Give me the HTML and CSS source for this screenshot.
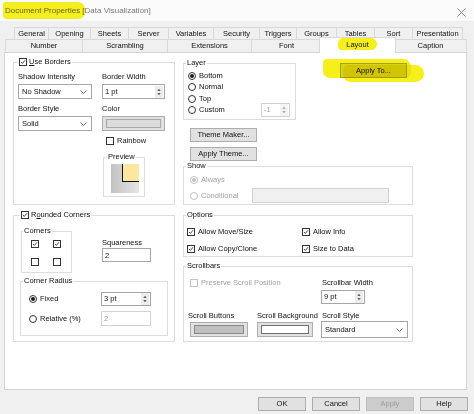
FILE: index.html
```html
<!DOCTYPE html>
<html lang="en">
<head>
<meta charset="utf-8">
<title>Document Properties</title>
<link rel="stylesheet" href="styles.css">
</head>
<body>
<div class="titlebar">
  <div class="title"><span class="title-hl">Document Properties [</span>Data Visualization]</div>
  <svg class="close" width="9" height="9" viewBox="0 0 9 9"><path d="M0.5 0.5L8.5 8.5M8.5 0.5L0.5 8.5" stroke="#7a7a7a" stroke-width="0.9" fill="none"/></svg>
</div>

<div class="tabs">
  <div class="tabrow back">
    <div class="tab t-general">General</div>
    <div class="tab t-opening">Opening</div>
    <div class="tab t-sheets">Sheets</div>
    <div class="tab t-server">Server</div>
    <div class="tab t-variables">Variables</div>
    <div class="tab t-security">Security</div>
    <div class="tab t-triggers">Triggers</div>
    <div class="tab t-groups">Groups</div>
    <div class="tab t-tables">Tables</div>
    <div class="tab t-sort">Sort</div>
    <div class="tab t-presentation last">Presentation</div>
  </div>
  <div class="tabrow front">
    <div class="tab t-number">Number</div>
    <div class="tab t-scrambling">Scrambling</div>
    <div class="tab t-extensions">Extensions</div>
    <div class="tab t-font">Font</div>
    <div class="tab t-layout active"><span class="tab-hl"></span>Layout</div>
    <div class="tab t-caption last">Caption</div>
  </div>
</div>

<div class="panel">
  <div class="col-left">
    <fieldset class="group g-borders">
      <legend class="legend-cb lg-borders"><span class="cb"><svg viewBox="0 0 8 8"><polyline points="1.3,4 3.1,5.9 6.7,1.7"/></svg></span><span><u>U</u>se Borders</span></legend>
      <div class="borders-body">
        <div class="bcol bcol1">
          <div class="lbl">Shadow Intensity</div>
          <div class="select sel-shadow"><span>No Shadow</span><svg class="chev" viewBox="0 0 7 4"><polyline points="0.5,0.5 3.5,3.5 6.5,0.5"/></svg></div>
          <div class="lbl mt5">Border Style</div>
          <div class="select sel-shadow"><span>Solid</span><svg class="chev" viewBox="0 0 7 4"><polyline points="0.5,0.5 3.5,3.5 6.5,0.5"/></svg></div>
        </div>
        <div class="bcol bcol2">
          <div class="lbl">Border Width</div>
          <div class="spin spin-bw"><span>1 pt</span><svg class="arrows" viewBox="0 0 8 13"><polygon points="2.2,5.2 4,3.2 5.8,5.2"/><polygon points="2.2,7.8 4,9.8 5.8,7.8"/></svg></div>
          <div class="lbl mt5">Color</div>
          <div class="colorbtn cbtn-color"><span class="swatch sw-light"></span></div>
          <div class="check-row rainbow"><span class="cb"></span><span>Rainbow</span></div>
          <fieldset class="group g-preview">
            <legend class="lg-preview">Preview</legend>
            <div class="preview-art"><div class="preview-box"></div></div>
          </fieldset>
        </div>
      </div>
    </fieldset>

    <fieldset class="group g-rounded">
      <legend class="legend-cb lg-rounded"><span class="cb"><svg viewBox="0 0 8 8"><polyline points="1.3,4 3.1,5.9 6.7,1.7"/></svg></span><span>R<u>o</u>unded Corners</span></legend>
      <div class="rounded-top">
        <fieldset class="group g-corners">
          <legend class="lg-corners">Corners</legend>
          <div class="corner-grid">
            <span class="cb"><svg viewBox="0 0 8 8"><polyline points="1.3,4 3.1,5.9 6.7,1.7"/></svg></span>
            <span class="cb"><svg viewBox="0 0 8 8"><polyline points="1.3,4 3.1,5.9 6.7,1.7"/></svg></span>
            <span class="cb"></span>
            <span class="cb"></span>
          </div>
        </fieldset>
        <div class="squareness">
          <div class="lbl">Squareness</div>
          <div class="textbox tb-sq">2</div>
        </div>
      </div>
      <fieldset class="group g-radius">
        <legend class="lg-radius">Corner Radius</legend>
        <div class="radius-grid">
          <div class="radio-row"><span class="rb on"></span><span>Fixed</span></div>
          <div class="spin spin-radius"><span>3 pt</span><svg class="arrows" viewBox="0 0 8 13"><polygon points="2.2,5.2 4,3.2 5.8,5.2"/><polygon points="2.2,7.8 4,9.8 5.8,7.8"/></svg></div>
          <div class="radio-row"><span class="rb"></span><span>Relative (%)</span></div>
          <div class="textbox tb-rel disabled">2</div>
        </div>
      </fieldset>
    </fieldset>
  </div>

  <div class="col-right">
    <div class="top-row">
      <fieldset class="group g-layer">
        <legend class="lg-layer">Layer</legend>
        <div class="radio-row lrow"><span class="rb on"></span><span>Bottom</span></div>
        <div class="radio-row lrow"><span class="rb"></span><span>Normal</span></div>
        <div class="radio-row lrow"><span class="rb"></span><span>Top</span></div>
        <div class="radio-row lrow"><span class="rb"></span><span>Custom</span>
          <div class="spin spin-custom disabled"><span>-1</span><svg class="arrows" viewBox="0 0 8 13"><polygon points="2.2,5.2 4,3.2 5.8,5.2"/><polygon points="2.2,7.8 4,9.8 5.8,7.8"/></svg></div>
        </div>
      </fieldset>
      <div class="btn btn-applyto">Apply To...</div>
      <span class="hl-blob blob1"></span>
      <span class="hl-blob blob2"></span>
    </div>
    <div class="btn btn-theme">Theme Maker...</div>
    <div class="btn btn-theme btn-applytheme">Apply Theme...</div>

    <fieldset class="group g-show">
      <legend class="lg-show">Show</legend>
      <div class="radio-row dis show-row1"><span class="rb on dis"></span><span>Always</span></div>
      <div class="radio-row dis show-row2"><span class="rb dis"></span><span class="cond-lbl">Conditional</span><div class="textbox tb-cond disabled"></div></div>
    </fieldset>

    <fieldset class="group g-options">
      <legend class="lg-options">Options</legend>
      <div class="options-grid">
        <div class="check-row"><span class="cb"><svg viewBox="0 0 8 8"><polyline points="1.3,4 3.1,5.9 6.7,1.7"/></svg></span><span>Allow Move/Size</span></div>
        <div class="check-row"><span class="cb"><svg viewBox="0 0 8 8"><polyline points="1.3,4 3.1,5.9 6.7,1.7"/></svg></span><span>Allow Info</span></div>
        <div class="check-row"><span class="cb"><svg viewBox="0 0 8 8"><polyline points="1.3,4 3.1,5.9 6.7,1.7"/></svg></span><span>Allow Copy/Clone</span></div>
        <div class="check-row"><span class="cb"><svg viewBox="0 0 8 8"><polyline points="1.3,4 3.1,5.9 6.7,1.7"/></svg></span><span>Size to Data</span></div>
      </div>
    </fieldset>

    <fieldset class="group g-scroll">
      <legend class="lg-scroll">Scrollbars</legend>
      <div class="scroll-grid">
        <div class="check-row dis preserve"><span class="cb dis"></span><span>Preserve Scroll Position</span></div>
        <div class="lbl sw-lbl">Scrollbar Width</div>
        <div class="spin spin-sw"><span>9 pt</span><svg class="arrows" viewBox="0 0 8 13"><polygon points="2.2,5.2 4,3.2 5.8,5.2"/><polygon points="2.2,7.8 4,9.8 5.8,7.8"/></svg></div>
        <div class="lbl sl1">Scroll Buttons</div>
        <div class="lbl sl2">Scroll Background</div>
        <div class="lbl sl3">Scroll Style</div>
        <div class="colorbtn cbtn-sb"><span class="swatch sw-gray"></span></div>
        <div class="colorbtn cbtn-bg"><span class="swatch sw-white"></span></div>
        <div class="select sel-style"><span>Standard</span><svg class="chev" viewBox="0 0 7 4"><polyline points="0.5,0.5 3.5,3.5 6.5,0.5"/></svg></div>
      </div>
    </fieldset>
  </div>
</div>

<div class="footer">
  <div class="btn fbtn">OK</div>
  <div class="btn fbtn">Cancel</div>
  <div class="btn fbtn fdis">Apply</div>
  <div class="btn fbtn">Help</div>
</div>
</body>
</html>
```

FILE: styles.css
```css
* { box-sizing: border-box; }
html, body { margin: 0; padding: 0; }
body {
  width: 474px;
  height: 414px;
  overflow: hidden;
  background: #f0f0f0;
  font-family: "Liberation Sans", Arial, sans-serif;
  font-size: 7.5px;
  line-height: 10px;
  color: #111;
}

/* Title bar */
.titlebar {
  height: 21px;
  background: #fbfbfb;
  display: flex;
  align-items: center;
  justify-content: space-between;
  padding: 0 8px 0 3px;
}
.title { font-size: 8px; color: #777; white-space: nowrap; }
.title-hl {
  background: #f5ef1f;
  color: #6a6316;
  padding: 4px 0 4px 2px;
  border-radius: 3px 7px 7px 4px;
}
.close { margin-top: 3px; }

/* Tabs */
.tabs { padding-top: 6px; }
.tabrow { display: flex; }
.tabrow.back { height: 12px; margin-left: 14px; }
.tabrow.front { height: 13px; margin-left: 5px; }
.tab {
  flex: none;
  text-align: center;
  border-top: 1px solid #d9d9d9;
  border-left: 1px solid #d9d9d9;
  background: #f0f0f0;
  white-space: nowrap;
  color: #111;
}
.tab.last { border-right: 1px solid #d9d9d9; }
.back .tab { line-height: 11px; }
.front .tab { line-height: 12px; }
.t-general { width: 34px; }
.t-opening { width: 42px; }
.t-sheets { width: 38px; }
.t-server { width: 40px; }
.t-variables { width: 45px; }
.t-security { width: 46px; }
.t-triggers { width: 37px; }
.t-groups { width: 40px; }
.t-tables { width: 38px; }
.t-sort { width: 38px; }
.t-presentation { width: 51px; }
.t-number { width: 77px; }
.t-scrambling { width: 85px; }
.t-extensions { width: 84px; }
.t-font { width: 70px; }
.t-layout { width: 73px; }
.t-caption { width: 73px; }
.tab.active {
  position: relative;
  z-index: 2;
  width: 77px;
  margin: -2px -2px 0 -2px;
  height: 16px;
  background: #fff;
  border-right: 1px solid #d9d9d9;
  line-height: 14px;
}
.tab-hl {
  position: absolute;
  left: 18px;
  top: 0;
  width: 39px;
  height: 12px;
  border-radius: 5px 6px 6px 4px;
  background: #f6ef1c;
  mix-blend-mode: multiply;
}

/* Panel */
.panel {
  margin-left: 4px;
  width: 463px;
  height: 338px;
  background: #fff;
  border: 1px solid #d5d5d5;
  display: flex;
  align-items: flex-start;
  padding: 4px 0 0 8px;
  gap: 8px;
}
.col-left { width: 162px; display: flex; flex-direction: column; }
.col-right { width: 230px; display: flex; flex-direction: column; align-items: flex-start; }

/* Group boxes */
.group {
  margin: 0;
  min-width: 0;
  border: 1px solid #dcdcdc;
  padding: 0;
}
.group > legend {
  padding: 0 1px;
  height: 10px;
  line-height: 10px;
  color: #111;
  white-space: nowrap;
}
.legend-cb { display: flex; align-items: center; gap: 2px; }

/* Controls */
.cb {
  flex: none;
  display: inline-block;
  width: 8px;
  height: 8px;
  border: 1px solid #333;
  background: #fff;
  position: relative;
}
.cb svg { display: block; width: 6px; height: 6px; }
.cb svg polyline { fill: none; stroke: #222; stroke-width: 1.1; }
.cb.dis { border-color: #c4c4c4; }
.rb {
  flex: none;
  display: inline-block;
  width: 8px;
  height: 8px;
  border: 1px solid #333;
  border-radius: 50%;
  background: #fff;
  position: relative;
}
.rb.on::after {
  content: "";
  position: absolute;
  left: 1px; top: 1px;
  width: 4px; height: 4px;
  border-radius: 50%;
  background: #1a1a1a;
}
.rb.dis { border-color: #c0c0c0; }
.rb.dis.on::after { background: #c0c0c0; }
.dis { color: #a3a3a3; }

.lbl { height: 10px; line-height: 10px; white-space: nowrap; color: #111; }
.mt5 { margin-top: 5px; }

.select {
  height: 15px;
  border: 1px solid #a6a6a6;
  background: #fff;
  display: flex;
  align-items: center;
  justify-content: space-between;
  padding: 0 4px 0 3px;
  white-space: nowrap;
}
.chev { width: 7px; height: 4px; }
.chev polyline { fill: none; stroke: #555; stroke-width: 0.9; }

.spin {
  height: 15px;
  border: 1px solid #a6a6a6;
  background: #fff;
  display: flex;
  align-items: center;
  justify-content: space-between;
  padding: 0 1px 0 2px;
}
.arrows { width: 8px; height: 12px; background: #ececec; border: none; }
.arrows polygon { fill: #333; }
.spin.disabled { border-color: #d0d0d0; color: #a0a0a0; }
.spin.disabled .arrows { background: #f4f4f4; }
.spin.disabled .arrows polygon { fill: #8a8a8a; }

.textbox {
  height: 15px;
  border: 1px solid #a6a6a6;
  background: #fff;
  padding: 0 2px;
  line-height: 13px;
}
.textbox.disabled { border-color: #d2d2d2; color: #a0a0a0; }

.colorbtn {
  height: 15px;
  border: 1px solid #adadad;
  background: #e1e1e1;
  padding: 2px 3px;
  display: flex;
}
.swatch { flex: 1; border: 1px solid #8c8c8c; }
.sw-light { background: #dcdcdc; border-color: #a8a8a8; }
.sw-gray { background: #c0c0c0; border-color: #8a8a8a; }
.sw-white { background: #fff; border-color: #707070; }

.btn {
  height: 14px;
  border: 1px solid #adadad;
  background: #e1e1e1;
  text-align: center;
  line-height: 12px;
  color: #111;
  white-space: nowrap;
}

.check-row, .radio-row {
  display: flex;
  align-items: center;
  gap: 3px;
  white-space: nowrap;
}

/* Use Borders */
.g-borders { padding: 5px 0 7px 4px; }
.lg-borders { padding: 0 0 0 2px; }
.borders-body { display: flex; gap: 10px; }
.bcol { display: flex; flex-direction: column; }
.bcol1 { width: 74px; }
.bcol2 { width: 63px; }
.bcol .select, .bcol .spin, .bcol .colorbtn { margin-top: 2px; }
.rainbow { margin: 5px 0 0 4px; height: 10px; }
.g-preview { width: 42px; margin: 6px 0 0 1px; padding: 2px 0 3px 4px; }
.lg-preview { margin-left: -1px; }
.preview-art {
  width: 28px;
  height: 29px;
  margin-left: 3px;
  background: linear-gradient(to right, #c2c2c2 0%, #d6d6d6 55%, #e6e6e6 100%);
  display: flex;
  justify-content: flex-end;
}
.preview-box {
  width: 17px;
  height: 18px;
  background: #fde6a0;
  border-left: 1px solid #111;
  border-bottom: 1px solid #111;
}

/* Rounded corners */
.g-rounded { margin-top: 5px; padding: 6px 6px 5px 6px; }
.lg-rounded { padding: 0; }
.rounded-top { display: flex; align-items: flex-start; }
.g-corners { width: 51px; margin-left: 1px; padding: 4px 0 6px 9px; }
.lg-corners { margin-left: -8px; }
.corner-grid {
  display: grid;
  grid-template-columns: 8px 8px;
  grid-template-rows: 8px 8px;
  column-gap: 14px;
  row-gap: 10px;
}
.squareness { margin: 12px 0 0 30px; display: flex; flex-direction: column; }
.tb-sq { width: 49px; height: 14px; }
.g-radius { width: 148px; margin-top: 3px; padding: 5px 0 9px 8px; }
.lg-radius { margin-left: -6px; }
.radius-grid {
  display: grid;
  grid-template-columns: 72px 50px;
  grid-template-rows: 15px 15px;
  row-gap: 5px;
  align-items: center;
}
.spin-radius { height: 14px; }

/* Right column */
.top-row { position: relative; display: flex; align-items: flex-start; }
.g-layer { width: 113px; margin-top: 1px; padding: 2px 5px 3px 4px; }
.lg-layer { margin-left: -2px; }
.lrow { height: 11.5px; }
.spin-custom { width: 29px; height: 14px; margin-left: auto; }
.btn-applyto { width: 67px; height: 15px; margin: 6px 0 0 44px; line-height: 13px; }
.hl-blob {
  position: absolute;
  background: #f6ef1c;
  mix-blend-mode: multiply;
}
.blob1 { left: 140px; top: 2px; width: 88px; height: 19px; border-radius: 4px 8px 6px 7px; }
.blob2 { left: 160px; top: 8px; width: 81px; height: 17px; border-radius: 6px 10px 10px 9px; }

.btn-theme { width: 67px; margin: 8px 0 0 7px; }
.btn-applytheme { margin-top: 5px; }

.g-show { width: 230px; padding: 3px 0 1px 6px; }
.lg-show { margin-left: -4px; }
.show-row1 { height: 12px; }
.show-row2 { height: 15px; margin-top: 2px; }
.cond-lbl { width: 48px; }
.tb-cond { width: 137px; background: #f0f0f0; }

.g-options { width: 230px; margin-top: 5px; padding: 6px 0 1px 3px; }
.lg-options { margin-left: -1px; }
.options-grid {
  display: grid;
  grid-template-columns: 115px auto;
  grid-template-rows: 12px 12px;
  row-gap: 5px;
}

.g-scroll { width: 230px; margin-top: 4px; padding: 7px 0 3px 4px; }
.lg-scroll { margin-left: -2px; }
.scroll-grid {
  display: grid;
  grid-template-columns: 69px 64px 88px;
  grid-template-rows: 10px 16px 17px 17px;
}
.preserve { grid-column: 1 / 3; grid-row: 1; margin-left: 2px; height: 10px; }
.sw-lbl { grid-column: 3; grid-row: 1; margin-left: 1px; }
.spin-sw { grid-column: 3; grid-row: 2; width: 44px; height: 14px; align-self: end; }
.sl1 { grid-column: 1; grid-row: 3; align-self: end; }
.sl2 { grid-column: 2; grid-row: 3; align-self: end; }
.sl3 { grid-column: 3; grid-row: 3; align-self: end; margin-left: 1px; }
.cbtn-sb { grid-column: 1; grid-row: 4; width: 58px; margin-left: 2px; align-self: center; }
.cbtn-bg { grid-column: 2; grid-row: 4; width: 56px; align-self: center; }
.sel-style { grid-column: 3; grid-row: 4; width: 87px; height: 17px; }

/* Footer */
.footer {
  height: 24px;
  display: flex;
  justify-content: flex-end;
  gap: 6px;
  padding: 7px 6px 0 0;
}
.fbtn { width: 48px; }
.fdis { background: #cccccc; border-color: #bfbfbf; color: #9c9c9c; }
```
